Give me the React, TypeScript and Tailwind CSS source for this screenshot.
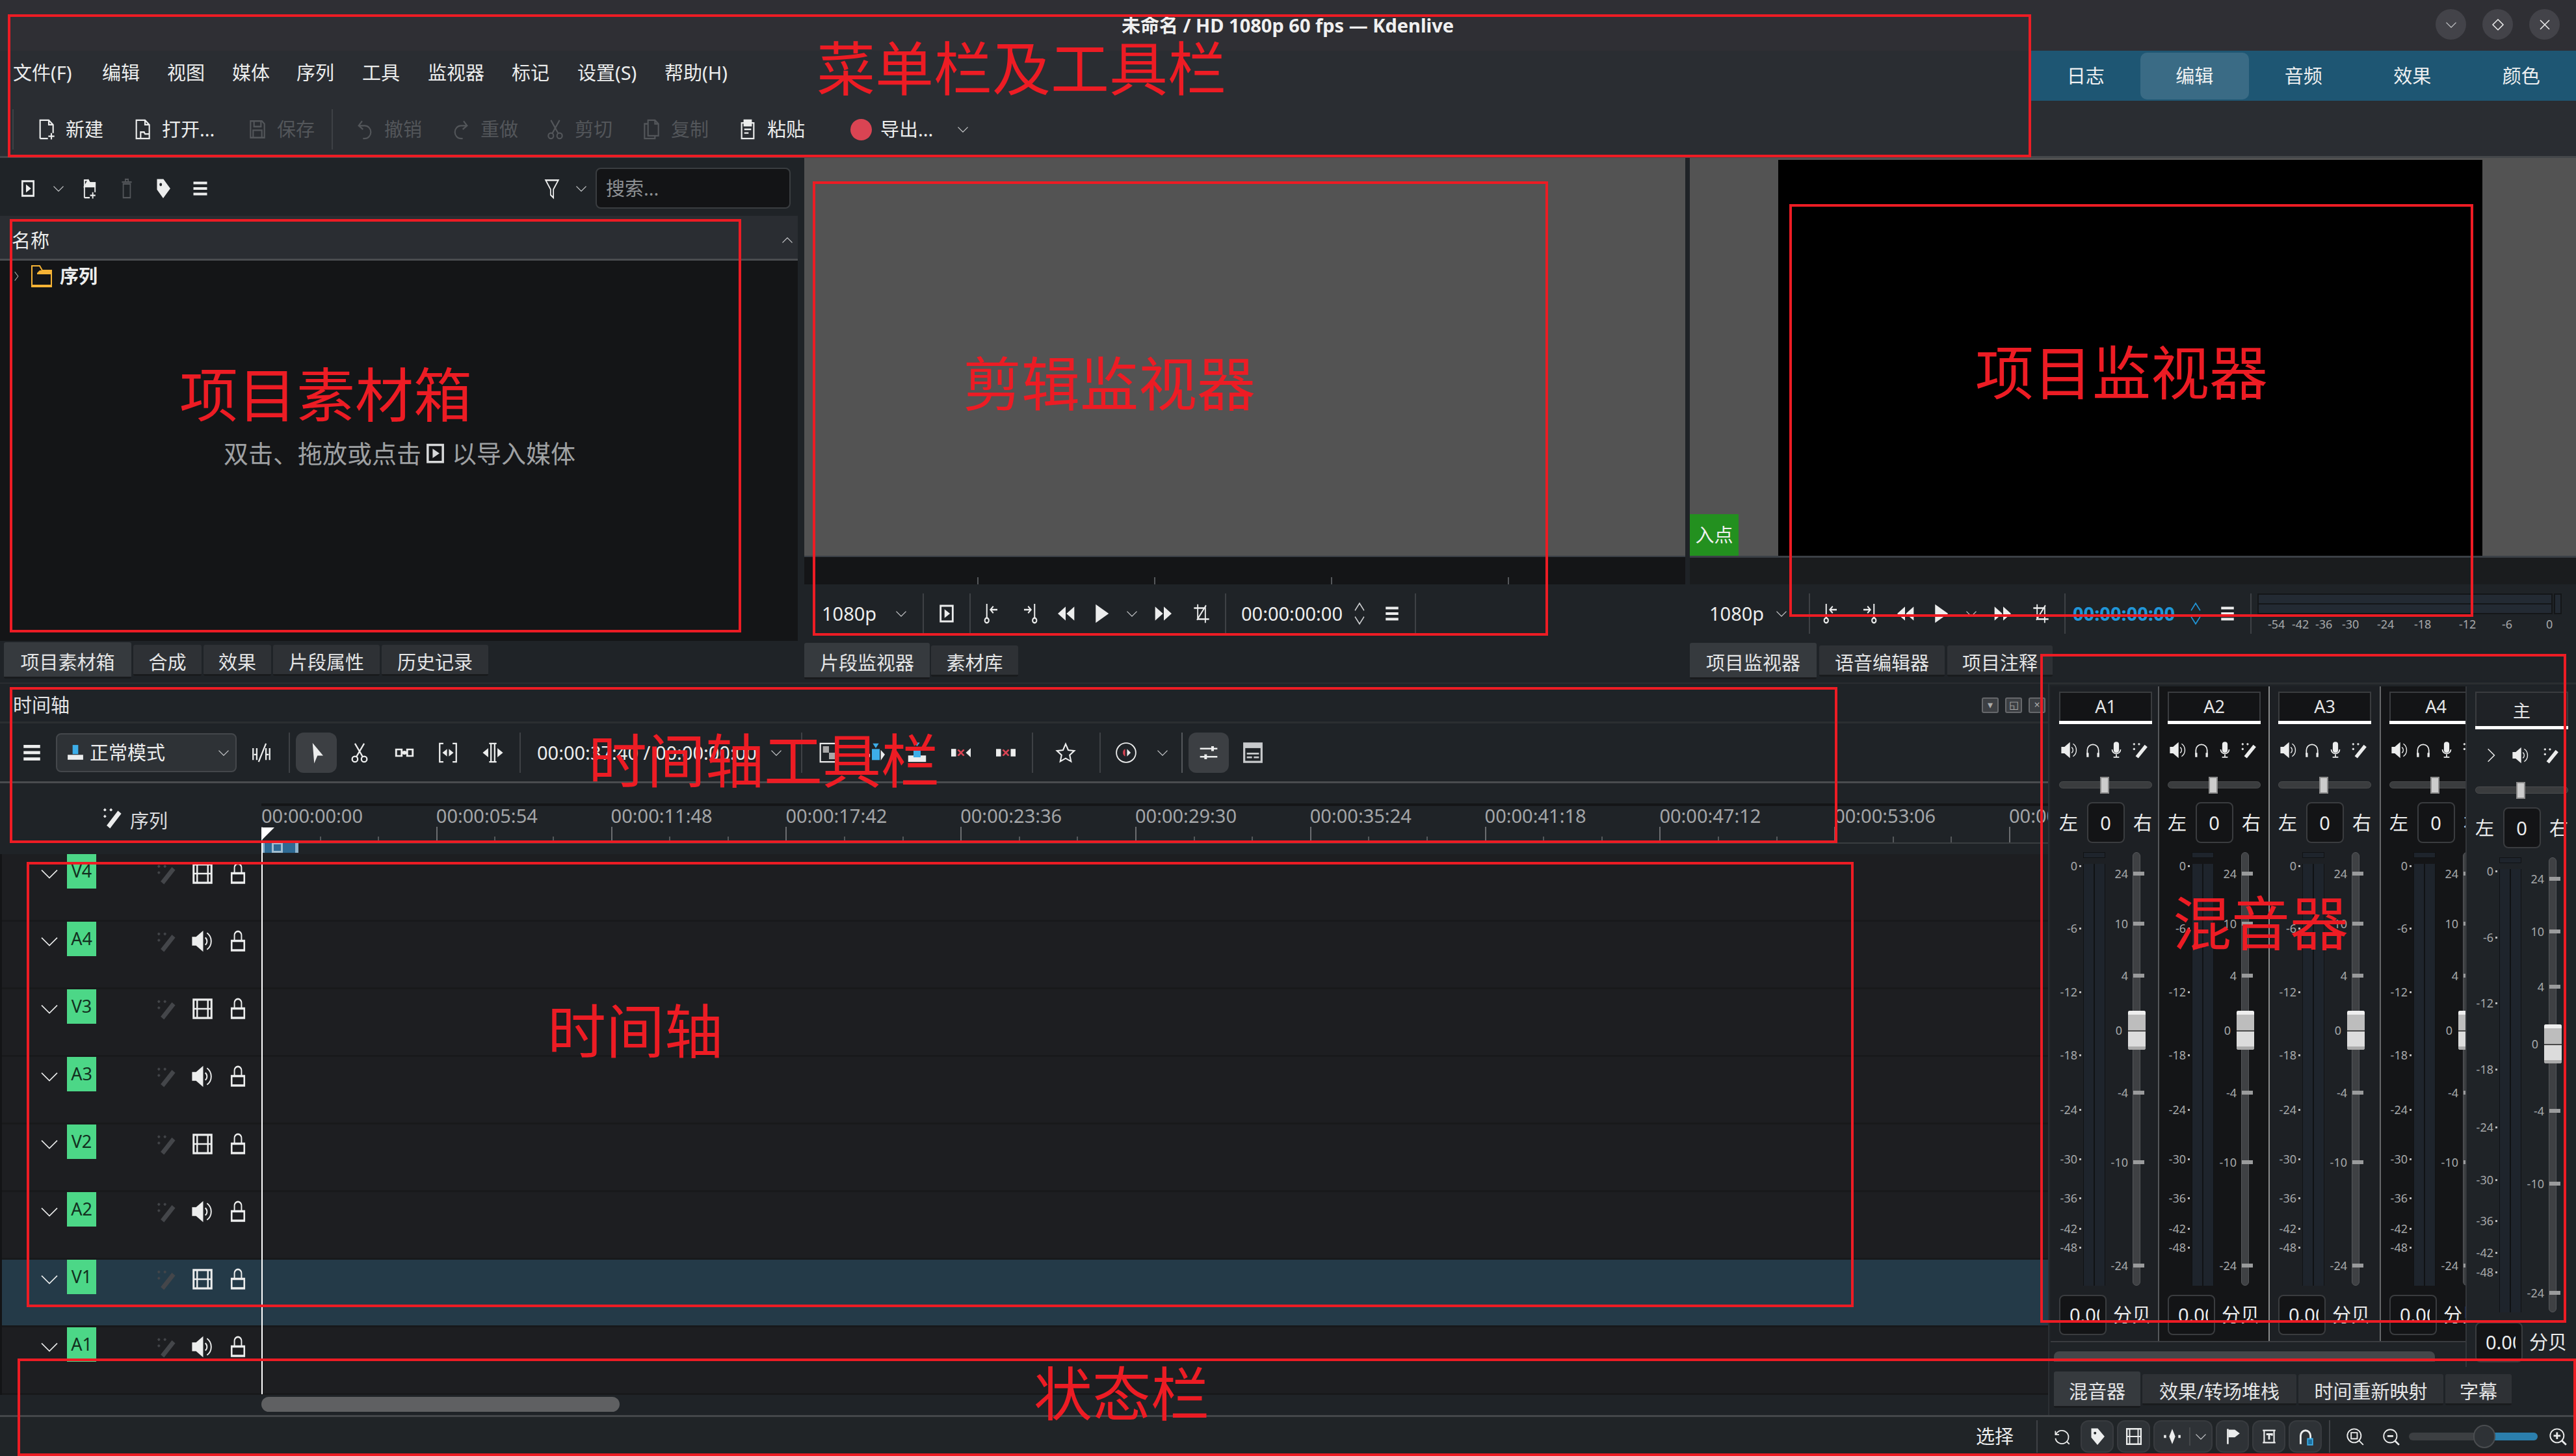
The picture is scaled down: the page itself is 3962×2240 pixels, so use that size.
import type { ReactNode } from 'react';

const paths: Record<string, ReactNode> = {
  docNew: <><path d="M5 22V2h10l5 5v9M15 2v5h5M5 22h9" /><path d="M18 16v7M14.5 19.5h7" /></>,
  docOpen: <><path d="M5 22V2h10l5 5v15zM15 2v5h5" /><path d="M10 22v-7h4l1 2h5" /></>,
  save: <><path d="M4 3h13l3 3v15H4z" /><path d="M8 3v6h8V3M7 21v-8h10v8" /></>,
  undo: <path d="M9 3L5 8l5 4M5 8h7a7 7 0 0 1 0 14h-2" />,
  redo: <path d="M15 3l4 5-5 4M19 8h-7a7 7 0 0 0 0 14h2" />,
  cut: <><circle cx="7" cy="19" r="3" /><circle cx="17" cy="19" r="3" /><path d="M8.5 16.5L17 2M15.5 16.5L7 2" /></>,
  copy: <><path d="M8 2h8l4 4v13H8zM16 2v4h4" /><path d="M8 6H4v16h12v-3" /></>,
  paste: <><path d="M5 5h14v17H5z" /><path d="M8 2h8v6H8z" fill="currentColor" /><path d="M8 12h8M8 16h5" /></>,
  chev: <path d="M3 8l9 9 9-9" />,
  chevUp: <path d="M3 16l9-9 9 9" />,
  chevRight: <path d="M8 3l9 9-9 9" />,
  spin: <path d="M5 9l7-7 7 7M5 15l7 7 7-7" />,
  menu: <path d="M3 3h18v3.5H3zM3 10.2h18v3.5H3zM3 17.5h18V21H3z" fill="currentColor" stroke="none" />,
  clipPlay: <><path d="M4 3h16v18H4z" strokeWidth="2.4" /><path d="M10 8.5l5 3.5-5 3.5z" fill="currentColor" /></>,
  folderAdd: <><path d="M5 22V3h5l2 3h7v10" /><path d="M10 3l2 3h7v4H5z" fill="currentColor" /><path d="M16 16v7M12.5 19.5h7M5 22h7" /></>,
  trash: <path d="M7 7h10v15H7zM5 5h14M10 2h4v3h-4z" />,
  tag: <><path d="M4 2h8l9 10-9 10-8-9z" fill="currentColor" /><circle cx="8.5" cy="7.5" r="1.8" fill="#23262a" stroke="none" /></>,
  funnel: <path d="M3 3h18l-7 10v9l-4-3v-6z" />,
  cursor: <path d="M7 2l13 13h-7l-4 8z" fill="currentColor" stroke="none" />,
  wand: <><path d="M21 6L8 22" strokeWidth="5" /><path d="M4 2v3M2.500 3.500h3M11 2v3M9.500 3.500h3M4 9v3M2.500 10.500h3" strokeWidth="1.4" /></>,
  film: <><path d="M2 2h20v20H2z" strokeWidth="2.2" /><path d="M2 12h20M6 2v20M18 2v20" strokeWidth="1.800" /></>,
  speaker: <><path d="M1 8h4l7-6v20l-7-6H1z" fill="currentColor" /><path d="M15 8a5 5 0 0 1 0 8M17 3a11 11 0 0 1 0 18" /></>,
  lock: <><path d="M3 12h18v10H3z" strokeWidth="2.400" /><path d="M7 12V6a5 4 0 0 1 10 0v6" strokeWidth="1.800" /></>,
  head: <><path d="M4 19v-7a8 8 0 0 1 16 0v7" /><path d="M3 16h3v6H3zM18 16h3v6h-3z" fill="currentColor" stroke="none" /></>,
  mic: <><path d="M9 4a3 3 0 0 1 6 0v8a3 3 0 0 1-6 0z" fill="currentColor" /><path d="M6 11a6 6 0 0 0 12 0M12 18v4M8 22h8" /></>,
  spacer: <><path d="M3 8h6v8H3zM15 8h6v8h-6z" strokeWidth="2" /><path d="M9 12h6" /><circle cx="12" cy="12" r="1.600" fill="currentColor" /></>,
  ripple: <><path d="M7 2H3v20h4M17 2h4v20h-4" /><path d="M6 12l5-4v8zM18 12l-5-4v8z" fill="currentColor" stroke="none" /></>,
  slip: <><path d="M10 2v20M14 2v20M8 2h8M8 22h8" /><path d="M1 12l6-5v10zM23 12l-6-5v10z" fill="currentColor" stroke="none" /></>,
  mix: <><path d="M3 7v13M7 7v13M17 7v13M21 7v13M9 22L17 2" /><path d="M4 14h3M17 14h3" /></>,
  checker: <><path d="M2 2h20v20H2z" /><path d="M5 5h7v7H5zM12 12h7v7h-7z" fill="#a8a8a8" stroke="none" /></>,
  insert: <><path d="M9 8h9v12H9z" fill="#3daee9" stroke="none" /><path d="M10 2h7l-3.500 5z" fill="#3daee9" stroke="none" /><path d="M20 11l3 3-3 4z" fill="currentColor" /><path d="M2 14h4v2H2z" fill="currentColor" /></>,
  overwrite: <><path d="M2 15h20v7H2z" fill="currentColor" stroke="none" /><path d="M8 6h8v11H8z" fill="#3daee9" stroke="none" /><path d="M9 1h6l-3 4z" fill="#3daee9" stroke="none" /></>,
  liftA: <><path d="M2 7h5v10H2z" fill="currentColor" stroke="none" /><path d="M9 8l6 8M15 8l-6 8" stroke="#da4453" strokeWidth="2" /><path d="M22 6l-5 6 5 6z" fill="currentColor" stroke="none" /></>,
  liftB: <><path d="M2 7h5v10H2zM17 7h5v10h-5z" fill="currentColor" stroke="none" /><path d="M9 8l6 8M15 8l-6 8" stroke="#da4453" strokeWidth="2" /></>,
  star: <path d="M12 2l3 7 7 .8-5.300 5 1.500 7.200L12 18.500 5.800 22l1.500-7.200L2 9.800 9 9z" />,
  rec: <><circle cx="12" cy="12" r="10.500" /><path d="M11 8a4.500 4.500 0 0 0 0 8z" fill="#da4453" stroke="none" /><path d="M13 8l4 4-4 4z" fill="currentColor" stroke="none" /></>,
  sliders: <><path d="M2 7h20M2 17h20" strokeWidth="2" /><path d="M15 4h3v6h-3zM7 14h3v6H7z" fill="currentColor" stroke="none" /></>,
  subs: <><path d="M2 2h20v20H2z" strokeWidth="2.400" /><path d="M2 2h20v5H2z" fill="currentColor" stroke="none" /><path d="M5 13h14M5 17h6M13 17h6" strokeWidth="2" /></>,
  setIn: <><path d="M7 2v14" /><circle cx="7" cy="19" r="2.500" /><path d="M20 8h-8M15 4.500L11.500 8l3.500 3.500" /></>,
  setOut: <><path d="M17 2v14" /><circle cx="17" cy="19" r="2.500" /><path d="M4 8h8M9 4.500L12.500 8 9 11.500" /></>,
  rew: <path d="M12 4v16L3 12zM22 4v16l-9-8z" fill="currentColor" stroke="none" />,
  play: <path d="M5 3l16 9-16 9z" fill="currentColor" stroke="none" />,
  fwd: <path d="M2 4v16l9-8zM12 4v16l9-8z" fill="currentColor" stroke="none" />,
  crop: <path d="M7 2v16h15M2 6h15v16M18 3L6 19" />,
  refresh: <><path d="M4 8a9 9 0 1 1-1 6M3 4v5h5" /><path d="M18 18l4 4" /></>,
  wave: <path d="M12 2l4 10-4 10-4-10zM1 10h3v4H1zM20 10h3v4h-3z" fill="currentColor" stroke="none" />,
  flag: <><path d="M5 2v20" strokeWidth="2.400" /><path d="M6 3h9l7 5-7 5H6z" fill="currentColor" stroke="none" /></>,
  title: <><path d="M3 4h18M3 20h18M5 4v16M19 4v16" strokeWidth="2" /><path d="M8 9h8v2M12 9v7" strokeWidth="2.600" /></>,
  magnet: <><path d="M5 22V11a7 7 0 0 1 14 0v4" strokeWidth="2.600" /><path d="M15 15h7v8h-7z" fill="#1d6f9e" stroke="#3daee9" /></>,
  zoomFit: <><circle cx="11" cy="11" r="9" /><path d="M7 7h8v8H7zM17.500 17.500L23 23" /></>,
  zoomOut: <><circle cx="11" cy="11" r="9" /><path d="M7 11h8M17.500 17.500L23 23" strokeWidth="2.400" /></>,
  zoomIn: <><circle cx="11" cy="11" r="9" /><path d="M6.500 11h9M11 6.500v9M17.500 17.500L23 23" strokeWidth="2.400" /></>,
};

function Icon({ name, className = 'w-[30px] h-[30px]', sw = 1.6 }: { name: string; className?: string; sw?: number }) {
  return (
    <svg viewBox="0 0 24 24" preserveAspectRatio="none" fill="none" stroke="currentColor" strokeWidth={sw} className={`shrink-0 ${className}`}>
      {paths[name]}
    </svg>
  );
}

const Chev = () => <Icon name="chev" sw={1.5} className="w-[20px] h-[20px] text-[#c8cacc]" />;
const Sep = ({ cls = 'h-[62px]' }: { cls?: string }) => <div className={`w-[2px] bg-[#3e4145] shrink-0 ${cls}`} />;

function MenuBar() {
  const items = [
    ['文件(F)', 'w-[137px]'], ['编辑', 'w-[100px]'], ['视图', 'w-[100px]'], ['媒体', 'w-[99px]'], ['序列', 'w-[101px]'],
    ['工具', 'w-[101px]'], ['监视器', 'w-[129px]'], ['标记', 'w-[101px]'], ['设置(S)', 'w-[134px]'], ['帮助(H)', 'w-[100px]'],
  ];
  return (
    <div className="h-[77px] flex bg-[#2a2d32]">
      <div className="flex-1 flex items-start pl-[20px] pt-[13px] text-[29px] leading-[42px] text-[#eceded]">
        {items.map(([t, w]) => <span key={t} className={`${w} whitespace-nowrap`}>{t}</span>)}
      </div>
      <div className="w-[839px] bg-[#1e5673] flex items-center pl-[1px] text-[29px] text-[#eef0f1]">
        {['日志', '编辑', '音频', '效果', '颜色'].map((t) => (
          <div key={t} className={`w-[167.5px] shrink-0 h-[72px] flex items-center justify-center ${t === '编辑' ? 'rounded-[10px] bg-[#3a6b85]' : ''}`}>{t}</div>
        ))}
      </div>
    </div>
  );
}

function ToolBtn({ icon, label, dim, w }: { icon: string; label: string; dim?: boolean; w: string }) {
  return (
    <div className={`flex items-center gap-[14px] ${w} ${dim ? 'text-[#53565a]' : 'text-[#eceded]'}`}>
      <Icon name={icon} className="w-[32px] h-[34px]" />
      <span className="whitespace-nowrap">{label}</span>
    </div>
  );
}

function MainToolbar() {
  return (
    <div className="h-[88px] flex items-center bg-[#2a2d32] border-b-[3px] border-[#44474a] pl-[19px] pt-[3px] text-[29px]">
      <Sep />
      <div className="w-[34px]" />
      <ToolBtn icon="docNew" label="新建" w="w-[148px]" />
      <ToolBtn icon="docOpen" label="打开..." w="w-[177px]" />
      <ToolBtn icon="save" label="保存" dim w="w-[130px]" />
      <Sep />
      <div className="w-[33px]" />
      <ToolBtn icon="undo" label="撤销" dim w="w-[148px]" />
      <ToolBtn icon="redo" label="重做" dim w="w-[145px]" />
      <ToolBtn icon="cut" label="剪切" dim w="w-[148px]" />
      <ToolBtn icon="copy" label="复制" dim w="w-[148px]" />
      <ToolBtn icon="paste" label="粘贴" w="w-[174px]" />
      <div className="w-[33px] h-[33px] rounded-full bg-[#da4453] mr-[13px]" />
      <span className="text-[#eceded] w-[117px] whitespace-nowrap">导出...</span>
      <Chev />
    </div>
  );
}

function TabBtn({ label, active, w }: { label: string; active?: boolean; w: string }) {
  return (
    <div className={`${w} flex items-center justify-center rounded-[3px] pt-[8px] text-[29px] text-[#e4e5e6] border-b-[3px] border-[#191b1d] ${active ? 'h-[56px] bg-[#363a3e]' : 'h-[48px] mt-[4px] bg-[#2e3135]'}`}>
      {label}
    </div>
  );
}

function BinPanel() {
  return (
    <div className="w-[1227px] flex flex-col bg-[#1f2327]">
      <div className="h-[89px] flex items-center pl-[30px] pr-[11px] pt-[4px] text-[#eceded]">
        <Icon name="clipPlay" className="w-[26px] h-[30px]" />
        <div className="ml-[24px] mr-[24px]"><Chev /></div>
        <Icon name="folderAdd" className="w-[28px] h-[34px]" />
        <div className="ml-[30px] text-[#53565a]"><Icon name="trash" className="w-[26px] h-[34px]" /></div>
        <div className="ml-[30px]"><Icon name="tag" className="w-[26px] h-[32px]" /></div>
        <div className="ml-[30px]"><Icon name="menu" className="w-[28px] h-[28px]" /></div>
        <div className="ml-auto flex items-center gap-[22px] mr-[12px]">
          <Icon name="funnel" className="w-[26px] h-[34px]" />
          <Chev />
        </div>
        <div className="w-[300px] h-[63px] rounded-[8px] bg-[#131416] border-[2px] border-[#3a3d40] flex items-center pl-[14px] text-[29px] text-[#8d9093]">搜索...</div>
      </div>
      <div className="h-[69px] flex items-center justify-between bg-[#2a2d32] border-b-[3px] border-[#4a4c4f] pl-[18px] pr-[6px] pt-[9px] text-[29px] text-[#eceded]">
        <span>名称</span>
        <Icon name="chevUp" sw={1.5} className="w-[20px] h-[20px] text-[#c8cacc]" />
      </div>
      <div className="h-[585px] bg-[#141517] flex flex-col">
        <div className="flex items-center h-[48px] pl-[18px] text-[29px] font-bold text-[#eceded]">
          <Icon name="chevRight" sw={1.5} className="w-[14px] h-[18px] text-[#aaa]" />
          <svg viewBox="0 0 32 34" className="w-[32px] h-[34px] ml-[16px] mr-[12px]">
            <path d="M1 33V1h12l4 7h14v25z" fill="none" stroke="#f5b335" strokeWidth="2" />
            <path d="M9 12l4-4h18v6H9z" fill="#f5b335" />
            <path d="M1 30h30v4H1z" fill="#f5b335" />
          </svg>
          <span>序列</span>
        </div>
        <div className="mt-[220px] ml-[344px] flex items-center text-[38px] text-[#9fa1a3] whitespace-nowrap">
          <span>双击、拖放或点击</span>
          <Icon name="clipPlay" className="w-[35px] h-[35px] mx-[4px] text-[#d8d9da]" />
          <span className="ml-[4px]">以导入媒体</span>
        </div>
      </div>
      <div className="h-[64px] flex items-start pt-[2px] pl-[6px] gap-[3px]">
        <TabBtn label="项目素材箱" active w="w-[196px]" />
        <TabBtn label="合成" w="w-[105px]" />
        <TabBtn label="效果" w="w-[104px]" />
        <TabBtn label="片段属性" w="w-[164px]" />
        <TabBtn label="历史记录" w="w-[164px]" />
      </div>
    </div>
  );
}

function Transport() {
  return (
    <div className="w-[391px] flex items-center text-[#eceded] shrink-0">
      <div className="w-[62px] flex justify-center"><Icon name="setIn" className="w-[30px] h-[36px]" /></div>
      <div className="w-[60px] flex justify-center"><Icon name="setOut" className="w-[30px] h-[36px]" /></div>
      <div className="w-[48px] flex justify-center"><Icon name="rew" className="w-[32px] h-[32px]" /></div>
      <div className="w-[62px] flex justify-center"><Icon name="play" className="w-[30px] h-[38px]" /></div>
      <div className="w-[32px] flex justify-center"><Chev /></div>
      <div className="w-[66px] flex justify-center"><Icon name="fwd" className="w-[32px] h-[32px]" /></div>
      <div className="w-[50px] flex justify-center"><Icon name="crop" className="w-[28px] h-[34px]" /></div>
    </div>
  );
}

function ClipMonitor() {
  return (
    <div className="w-[1362px] ml-[10px] flex flex-col bg-[#1f2327]">
      <div className="w-[1355px] h-[612px] bg-[#535353]" />
      <div className="w-[1355px] h-[44px] bg-[#141517] flex items-end pl-[266px] gap-[270px] border-t-[2px] border-[#3b4046]">
        {[0, 1, 2, 3].map((i) => <div key={i} className="w-[2px] h-[11px] bg-[#55585b]" />)}
      </div>
      <div className="h-[76px] flex items-center text-[#eceded] text-[29px] pt-[14px]">
        <span className="w-[139px] pl-[27px]">1080p</span>
        <Chev />
        <div className="w-[23px]" />
        <Sep />
        <div className="w-[70px] flex justify-center"><Icon name="clipPlay" className="w-[28px] h-[32px]" /></div>
        <Sep />
        <Transport />
        <Sep />
        <span className="ml-[23px] w-[170px] whitespace-nowrap">00:00:00:00</span>
        <Icon name="spin" sw={1.4} className="w-[24px] h-[38px] text-[#c8cacc]" />
        <div className="w-[25px]" />
        <Icon name="menu" className="w-[26px] h-[28px]" />
        <div className="w-[22px]" />
        <Sep />
      </div>
      <div className="h-[74px] flex items-start pt-[14px] gap-[2px]">
        <TabBtn label="片段监视器" active w="w-[193px]" />
        <TabBtn label="素材库" w="w-[134px]" />
      </div>
    </div>
  );
}

const levelMarks = [
  ['-54', 'w-[37px]'], ['-42', 'w-[36px]'], ['-36', 'w-[41px]'], ['-30', 'w-[54px]'], ['-24', 'w-[57px]'],
  ['-18', 'w-[69px]'], ['-12', 'w-[66px]'], ['-6', 'w-[68px]'], ['0', ''],
];

function ProjectMonitor() {
  return (
    <div className="flex-1 flex flex-col bg-[#1f2327]">
      <div className="h-[612px] bg-[#535353] flex items-stretch">
        <div className="w-[136px] flex flex-col justify-end">
          <div className="w-[75px] h-[64px] bg-[#23901f] flex items-center justify-center text-[29px] text-[#f0f0f0]">入点</div>
        </div>
        <div className="w-[1083px] mt-[3px] bg-black" />
      </div>
      <div className="h-[44px] bg-[#1a1c1e] border-t-[3px] border-[#3b4046]" />
      <div className="h-[76px] flex items-center text-[#eceded] text-[29px] pt-[14px]">
        <span className="w-[131px] pl-[30px]">1080p</span>
        <Chev />
        <div className="w-[32px]" />
        <Sep />
        <Transport />
        <Sep />
        <span className="ml-[11px] w-[177px] font-bold text-[#2196d8] whitespace-nowrap">00:00:00:00</span>
        <Icon name="spin" sw={1.4} className="w-[24px] h-[38px] text-[#2196d8]" />
        <div className="w-[24px]" />
        <Icon name="menu" className="w-[26px] h-[28px]" />
        <div className="w-[22px]" />
        <Sep />
        <div className="ml-[9px] flex flex-col h-[62px]">
          <div className="flex gap-[2px]">
            <div className="w-[454px] h-[32px] flex flex-col gap-[2px] bg-[#141618] p-[2px]">
              <div className="flex-1 bg-[#232a33]" />
              <div className="flex-1 bg-[#232a33]" />
            </div>
            <div className="w-[12px] h-[32px] bg-[#232a33] border-[2px] border-[#141618]" />
          </div>
          <div className="flex pl-[16px] text-[18px] leading-[30px] text-[#a6a8aa]">
            {levelMarks.map(([t, w]) => <span key={t} className={w}>{t}</span>)}
          </div>
        </div>
      </div>
      <div className="h-[74px] flex items-start pt-[14px] gap-[4px]">
        <TabBtn label="项目监视器" active w="w-[195px]" />
        <TabBtn label="语音编辑器" w="w-[193px]" />
        <TabBtn label="项目注释" w="w-[162px]" />
      </div>
    </div>
  );
}

function TimelineToolbar() {
  return (
    <div className="h-[92px] flex items-center pl-[32px] text-[#eceded] border-b-[3px] border-[#4a4c4f]">
      <Icon name="menu" className="w-[34px] h-[32px]" />
      <div className="ml-[20px] w-[278px] h-[60px] rounded-[8px] bg-[#2e3236] border-[2px] border-[#44474b] flex items-center pl-[15px] text-[29px]">
        <svg viewBox="0 0 24 24" className="w-[26px] h-[26px]"><path d="M8 1h8v13H8z" fill="#3daee9" /><path d="M1 15h22v7H1z" fill="#eceded" /></svg>
        <span className="ml-[9px] w-[196px]">正常模式</span>
        <Chev />
      </div>
      <div className="ml-[21px]"><Icon name="mix" className="w-[34px] h-[34px]" /></div>
      <div className="w-[25px]" />
      <Sep />
      <div className="ml-[9px] w-[63px] h-[62px] rounded-[12px] bg-[#3c3f43] flex items-center justify-center"><Icon name="cursor" className="w-[30px] h-[36px]" /></div>
      <div className="ml-[18px]"><Icon name="cut" className="w-[34px] h-[34px]" /></div>
      <div className="ml-[35px]"><Icon name="spacer" className="w-[34px] h-[30px]" /></div>
      <div className="ml-[33px]"><Icon name="ripple" className="w-[34px] h-[34px]" /></div>
      <div className="ml-[35px]"><Icon name="slip" className="w-[34px] h-[34px]" /></div>
      <div className="w-[24px]" />
      <Sep />
      <span className="ml-[25px] w-[358px] text-[29px] whitespace-nowrap">00:00:37:40 / 00:00:00:00</span>
      <Chev />
      <div className="w-[28px]" />
      <Sep />
      <div className="ml-[25px]"><Icon name="checker" className="w-[32px] h-[34px]" /></div>
      <div className="ml-[38px]"><Icon name="insert" className="w-[32px] h-[34px]" /></div>
      <div className="ml-[33px]"><Icon name="overwrite" className="w-[33px] h-[34px]" /></div>
      <div className="ml-[33px]"><Icon name="liftA" className="w-[36px] h-[28px]" /></div>
      <div className="ml-[33px]"><Icon name="liftB" className="w-[36px] h-[28px]" /></div>
      <div className="w-[22px]" />
      <Sep />
      <div className="ml-[34px]"><Icon name="star" className="w-[32px] h-[32px]" /></div>
      <div className="w-[36px]" />
      <Sep />
      <div className="ml-[22px]"><Icon name="rec" sw={1.3} className="w-[34px] h-[34px]" /></div>
      <div className="ml-[29px]"><Chev /></div>
      <div className="w-[19px]" />
      <Sep cls="h-[62px] bg-[#55585c]" />
      <div className="ml-[9px] w-[62px] h-[62px] rounded-[12px] bg-[#3c3f43] flex items-center justify-center"><Icon name="sliders" className="w-[32px] h-[30px]" /></div>
      <div className="ml-[21px]"><Icon name="subs" className="w-[32px] h-[34px] text-[#c8cacc]" /></div>
    </div>
  );
}

const rulerLabels = ['00:00:00:00', '00:00:05:54', '00:00:11:48', '00:00:17:42', '00:00:23:36', '00:00:29:30', '00:00:35:24', '00:00:41:18', '00:00:47:12', '00:00:53:06', '00:00:59:00'];

function Ruler() {
  return (
    <div className="flex h-[109px]">
      <div className="w-[402px] flex items-start justify-end pr-[144px] pt-[36px] text-[29px] text-[#dcdddf] gap-[12px]">
        <Icon name="wand" className="w-[32px] h-[34px] text-[#eceded]" />
        <span>序列</span>
      </div>
      <div className="flex-1 min-w-0 overflow-hidden">
        <div className="h-[31px]" />
        <div className="h-[4px] bg-[#141517]" />
        <div className="flex h-[32px] text-[29px] leading-[30px] text-[#a3a5a7]">
          {rulerLabels.map((t) => <span key={t} className="w-[268.8px] shrink-0 whitespace-nowrap">{t}</span>)}
        </div>
        <div className="flex h-[24px] items-end">
          {rulerLabels.map((t) => (
            <div key={t} className="w-[268.8px] shrink-0 flex items-end">
              <div className="w-[89.6px] h-[24px] border-l-[2px] border-[#6b6d70]" />
              <div className="w-[89.6px] h-[9px] border-l-[2px] border-[#55585b]" />
              <div className="w-[89.6px] h-[9px] border-l-[2px] border-[#55585b]" />
            </div>
          ))}
        </div>
        <div className="h-[2px] bg-[#3a3d40]" />
        <div className="h-[16px] -mt-[2px] w-[57px] bg-[#2f6a94] border-x-[5px] border-[#8fb3cc] flex justify-center">
          <div className="w-[17px] h-[16px] border-[3px] border-[#a0bdd0] -ml-[8px]" />
        </div>
      </div>
    </div>
  );
}

const tracks = ['V4', 'A4', 'V3', 'A3', 'V2', 'A2', 'V1', 'A1'];

function TrackRow({ name }: { name: string }) {
  const isAudio = name[0] === 'A';
  const active = name === 'V1';
  return (
    <div className={`h-[104px] flex border-b-[3px] ${active ? 'bg-[#243a48] border-[#17181a]' : 'bg-[#1d1e21] border-[#18191b]'}`}>
      <div className="w-[399px] flex items-start text-[#eceded]">
        <div className="ml-[57px] w-[32px] mt-[14px]"><Icon name="chev" sw={1.2} className="w-[32px] h-[32px]" /></div>
        <div className="ml-[11px] w-[45px] h-[53px] bg-[#4cd787] text-[#12301f] text-[27px] flex items-center justify-center">{name}</div>
        <div className="ml-[91px] mt-[14px] text-[#44464a]"><Icon name="wand" className="w-[32px] h-[33px]" /></div>
        <div className="ml-[24px] mt-[13px]"><Icon name={isAudio ? 'speaker' : 'film'} sw={1.4} className="w-[33px] h-[34px]" /></div>
        <div className="ml-[25px] mt-[12px]"><Icon name="lock" sw={1.4} className="w-[26px] h-[35px]" /></div>
      </div>
      <div className="flex-1" />
    </div>
  );
}

function Timeline() {
  return (
    <div className="w-[3150px] relative flex flex-col bg-[#1f2327]">
      <div className="h-[60px] flex items-center justify-between pl-[20px] pr-[4px] pt-[8px] text-[29px] text-[#e4e5e6] border-t-[2px] border-[#2a2d30]">
        <span>时间轴</span>
        <div className="flex gap-[10px]">
          {['▾', '◱', '×'].map((t) => (
            <div key={t} className="w-[26px] h-[24px] rounded-[3px] border-[2px] border-[#66686b] bg-[#3c3f43] text-[16px] leading-[18px] text-center text-[#aaa]">{t}</div>
          ))}
        </div>
      </div>
      <div className="h-[3px] bg-[#2b2e31]" />
      <TimelineToolbar />
      <Ruler />
      <div className="flex flex-col pl-[3px] bg-[#131416]">
        {tracks.map((t) => <TrackRow key={t} name={t} />)}
      </div>
      <div className="flex-1 pl-[402px] pt-[3px]">
        <div className="w-[551px] h-[23px] rounded-full bg-[#5f6062]" />
      </div>
      <div className="absolute left-[402px] top-[223px] w-[20px] h-[20px] bg-white [clip-path:polygon(0_0,100%_0,0_100%)]" />
      <div className="absolute left-[402px] top-[243px] w-[2px] h-[852px] bg-white" />
    </div>
  );
}

const stripDb = [['0', 21], ['-6', 117], ['-12', 215], ['-18', 312], ['-24', 396], ['-30', 472], ['-36', 532], ['-42', 579], ['-48', 608]] as const;
const stripFader = [['24', 33], ['10', 110], ['4', 190], ['-4', 370], ['-10', 477], ['-24', 636]] as const;
const masterDb = [['0', 21], ['-6', 123], ['-12', 224], ['-18', 326], ['-24', 415], ['-30', 496], ['-36', 559], ['-42', 608], ['-48', 638]] as const;
const masterFader = [['24', 33], ['10', 114], ['4', 199], ['-4', 390], ['-10', 502], ['-24', 670]] as const;

function MeterZone({ master }: { master?: boolean }) {
  const db = master ? masterDb : stripDb;
  const fader = master ? masterFader : stripFader;
  const zero = master ? 287 : 274;
  return (
    <div className={`relative ${master ? 'h-[700px]' : 'h-[667px]'}`}>
      <div className="absolute left-[50px] top-0 w-[34px] h-[9px] bg-[#1e242c] border-[1px] border-[#101214]" />
      <div className="absolute left-[50px] top-[18px] bottom-0 w-[34px] flex gap-[2px] bg-[#101214] px-[1px]">
        <div className="flex-1 bg-[#1e242c]" />
        <div className="flex-1 bg-[#1e242c]" />
      </div>
      {db.map(([t, y]) => (
        <div key={t} className="absolute left-0 w-[47px] flex items-center justify-end gap-[3px] -translate-y-1/2 text-[18px] leading-[20px] text-[#a6a8aa]" style={{ top: y }}>
          <span>{t}</span>
          <div className="w-[3px] h-[3px] bg-[#bbb]" />
        </div>
      ))}
      <div className="absolute left-[126px] top-0 bottom-0 w-[12px] rounded-full bg-[#3f4144] border-[1px] border-[#55575a]" />
      {fader.map(([t, y]) => (
        <div key={t} className="absolute left-[60px] w-[84px] flex items-center justify-end -translate-y-1/2 text-[18px] leading-[20px] text-[#a6a8aa]" style={{ top: y }}>
          <span className="mr-[8px]">{t}</span>
          <div className="w-[17px] h-[6px] bg-[#9a9b9c]" />
        </div>
      ))}
      <div className="absolute left-[84px] w-[26px] text-right -translate-y-1/2 text-[18px] leading-[20px] text-[#a6a8aa]" style={{ top: zero }}>0</div>
      <div className="absolute left-[119px] w-[27px] h-[60px] -translate-y-1/2 rounded-[3px] flex flex-col bg-[#cfcfcf]" style={{ top: zero }}>
        <div className="h-[6px] bg-[#eee] rounded-t-[3px]" />
        <div className="flex-1 border-b-[2px] border-[#4a4a4a] bg-[#bdbdbd]" />
        <div className="flex-1 bg-[#dcdcdc]" />
        <div className="h-[5px] bg-[#aaa] rounded-b-[3px]" />
      </div>
    </div>
  );
}

function Strip({ name, cls, master }: { name: string; cls: string; master?: boolean }) {
  return (
    <div className={`${cls} shrink-0 overflow-hidden pt-[8px] flex flex-col`}>
      <div className="pl-[13px] w-[156px]">
        <div className={`${master ? 'h-[53px] pt-[6px] bg-[#1f2226]' : 'h-[45px] bg-[#131416]'} border-x-[2px] border-t-[2px] border-[#3a3c3f] flex items-center justify-center text-[27px] text-[#e4e5e6]`}>{name}</div>
        <div className="h-[5px] bg-white" />
        <div className={`flex items-center ${master ? 'mt-[27px] pl-[11px] gap-[20px]' : 'mt-[27px] pl-[3px] gap-[10px]'} h-[26px] text-[#eceded]`}>
          {master ? (
            <>
              <Icon name="chevRight" sw={1.4} className="w-[26px] h-[26px]" />
              <Icon name="speaker" sw={1.3} className="w-[26px] h-[26px]" />
              <Icon name="wand" className="w-[26px] h-[26px]" />
            </>
          ) : (
            <>
              <Icon name="speaker" sw={1.3} className="w-[26px] h-[26px]" />
              <Icon name="head" className="w-[26px] h-[26px]" />
              <Icon name="mic" className="w-[26px] h-[26px]" />
              <Icon name="wand" className="w-[26px] h-[26px]" />
            </>
          )}
        </div>
        <div className="relative mt-[35px] h-[11px] rounded-full bg-[#3a3c3e] border-[1px] border-[#4a4c4e]">
          <div className="absolute left-[62px] -top-[8px] w-[14px] h-[26px] bg-[#ccc] border-[2px] border-[#8b8b8b]" />
        </div>
        <div className="mt-[21px] flex items-center justify-between text-[29px] text-[#eceded]">
          <span>左</span>
          <div className="w-[58px] h-[63px] rounded-[8px] bg-[#131416] border-[2px] border-[#3a3c3f] flex items-center justify-center">0</div>
          <span>右</span>
        </div>
      </div>
      <div className="mt-[14px] w-[156px]"><MeterZone master={master} /></div>
      <div className={`${master ? 'mt-[15px]' : 'mt-[14px]'} ml-[13px] w-[160px] flex items-center text-[29px] text-[#eceded]`}>
        <div className="w-[73px] h-[62px] shrink-0 rounded-[8px] bg-[#131416] border-[2px] border-[#3a3c3f] flex items-center pl-[14px]">
          <span className="w-[46px] overflow-hidden">0.00</span>
        </div>
        <span className="ml-[10px] whitespace-nowrap">分贝</span>
      </div>
    </div>
  );
}

function Mixer() {
  return (
    <div className="flex-1 flex flex-col bg-[#1f2327] border-l-[2px] border-[#2c2f33]">
      <div className="h-[6px] border-t-[3px] border-[#2b2e31]" />
      <div className="flex h-[1047px] pl-[2px]">
        <div className="w-[638px] flex flex-col">
          <div className="h-[1009px] flex border-b-[2px] border-[#3a3c40]">
            <Strip name="A1" cls="w-[167px] bg-[#1d2024] border-r-[2px] border-[#55575a]" />
            <Strip name="A2" cls="w-[170px] bg-[#141517] border-r-[2px] border-[#8a8b8c]" />
            <Strip name="A3" cls="w-[171px] bg-[#1d2024] border-r-[2px] border-[#66686a]" />
            <Strip name="A4" cls="w-[130px] bg-[#141517]" />
          </div>
          <div className="mt-[14px] ml-[5px] w-[586px] h-[16px] rounded-t-[8px] bg-[#44474a]" />
        </div>
        <Strip name="主" master cls="w-[170px] border-l-[2px] border-[#33363a]" />
      </div>
      <div className="flex items-start mt-[7px] pl-[7px] gap-[3px]">
        <TabBtn label="混音器" active w="w-[133px]" />
        <TabBtn label="效果/转场堆栈" w="w-[237px]" />
        <TabBtn label="时间重新映射" w="w-[223px]" />
        <TabBtn label="字幕" w="w-[102px]" />
      </div>
    </div>
  );
}

function StatusBtn({ icon, cls = 'w-[51px]' }: { icon: string; cls?: string }) {
  return (
    <div className={`${cls} h-[50px] rounded-[12px] bg-[#2e3236] border-[2px] border-[#383b3f] flex items-center justify-center text-[#eceded]`}>
      <Icon name={icon} className="w-[26px] h-[28px]" />
    </div>
  );
}

function StatusBar() {
  return (
    <div className="h-[63px] flex items-center bg-[#202427] border-t-[3px] border-[#44474a] text-[29px] text-[#eceded]">
      <div className="flex-1" />
      <span className="w-[93px]">选择</span>
      <Sep cls="h-[50px]" />
      <div className="ml-[24px] mr-[15px]"><Icon name="refresh" className="w-[27px] h-[27px]" /></div>
      <div className="flex gap-[5px]">
        <StatusBtn icon="tag" />
        <StatusBtn icon="film" />
        <div className="w-[91px] h-[50px] rounded-[12px] bg-[#2e3236] border-[2px] border-[#383b3f] flex items-center">
          <div className="w-[55px] flex justify-center border-r-[2px] border-[#44474a]"><Icon name="wave" className="w-[28px] h-[28px]" /></div>
          <div className="flex-1 flex justify-center"><Chev /></div>
        </div>
        <StatusBtn icon="flag" />
        <StatusBtn icon="title" />
        <StatusBtn icon="magnet" />
      </div>
      <div className="w-[11px]" />
      <Sep cls="h-[50px]" />
      <div className="ml-[24px]"><Icon name="zoomFit" className="w-[28px] h-[28px]" /></div>
      <div className="ml-[28px]"><Icon name="zoomOut" className="w-[27px] h-[27px]" /></div>
      <div className="relative ml-[14px] w-[198px] h-[12px] rounded-full bg-[#3c3f42] overflow-visible">
        <div className="absolute right-0 top-0 w-[70px] h-[12px] rounded-r-full bg-[#2b7fad]" />
        <div className="absolute left-[99px] -top-[12px] w-[34px] h-[36px] rounded-full bg-[#2e3236] border-[2px] border-[#4a4d50]" />
      </div>
      <div className="ml-[17px] mr-[14px]"><Icon name="zoomIn" className="w-[28px] h-[28px]" /></div>
    </div>
  );
}

const RedBox = ({ cls }: { cls: string }) => <div className={`absolute border-[4px] border-[#ed1c24] ${cls}`} />;
const RedText = ({ cls, text }: { cls: string; text: string }) => (
  <div className={`absolute text-[#ed1c24] text-[90px] leading-[90px] whitespace-nowrap ${cls}`}>{text}</div>
);

function Annotations() {
  return (
    <>
      <RedBox cls="left-[12px] top-[22px] w-[3112px] h-[220px]" />
      <RedBox cls="left-[15px] top-[337px] w-[1125px] h-[636px]" />
      <RedBox cls="left-[1250px] top-[279px] w-[1131px] h-[699px]" />
      <RedBox cls="left-[2752px] top-[314px] w-[1052px] h-[635px]" />
      <RedBox cls="left-[15px] top-[1057px] w-[2811px] h-[240px]" />
      <RedBox cls="left-[41px] top-[1326px] w-[2810px] h-[685px]" />
      <RedBox cls="left-[3138px] top-[1006px] w-[809px] h-[1029px]" />
      <RedBox cls="left-[27px] top-[2090px] w-[3935px] h-[150px]" />
      <RedText cls="left-[1256px] top-[59px]" text="菜单栏及工具栏" />
      <RedText cls="left-[276px] top-[561px]" text="项目素材箱" />
      <RedText cls="left-[1481px] top-[544px]" text="剪辑监视器" />
      <RedText cls="left-[3038px] top-[527px]" text="项目监视器" />
      <RedText cls="left-[905px] top-[1124px]" text="时间轴工具栏" />
      <RedText cls="left-[842px] top-[1540px]" text="时间轴" />
      <RedText cls="left-[3342px] top-[1374px]" text="混音器" />
      <RedText cls="left-[1590px] top-[2098px]" text="状态栏" />
    </>
  );
}

export default function App() {
  return (
    <div className="relative w-[3962px] h-[2240px] overflow-hidden flex flex-col bg-[#1f2327] font-['Noto_Sans','Noto_Sans_CJK_SC',sans-serif]">
      <div className="h-[78px] relative bg-[#2f2f34] flex items-start justify-end pt-[14px] pr-[25px] gap-[25px]">
        <div className="absolute left-[1725px] top-[19px] text-[29px] leading-[40px] font-bold text-[#f0f0f0] whitespace-nowrap">未命名 / HD 1080p 60 fps — Kdenlive</div>
        <div className="w-[47px] h-[47px] rounded-full bg-[#434349] flex items-center justify-center"><Chev /></div>
        <div className="w-[47px] h-[47px] rounded-full bg-[#434349] flex items-center justify-center text-[#eee]">
          <svg viewBox="0 0 20 20" className="w-[20px] h-[20px]"><path d="M10 2l8 8-8 8-8-8z" fill="none" stroke="currentColor" strokeWidth="1.5" /></svg>
        </div>
        <div className="w-[47px] h-[47px] rounded-full bg-[#434349] flex items-center justify-center text-[#eee]">
          <svg viewBox="0 0 20 20" className="w-[20px] h-[20px]"><path d="M3 3l14 14M17 3L3 17" fill="none" stroke="currentColor" strokeWidth="1.5" /></svg>
        </div>
      </div>
      <MenuBar />
      <MainToolbar />
      <div className="h-[807px] flex">
        <BinPanel />
        <ClipMonitor />
        <ProjectMonitor />
      </div>
      <div className="flex-1 min-h-0 flex">
        <Timeline />
        <Mixer />
      </div>
      <StatusBar />
      <Annotations />
    </div>
  );
}
